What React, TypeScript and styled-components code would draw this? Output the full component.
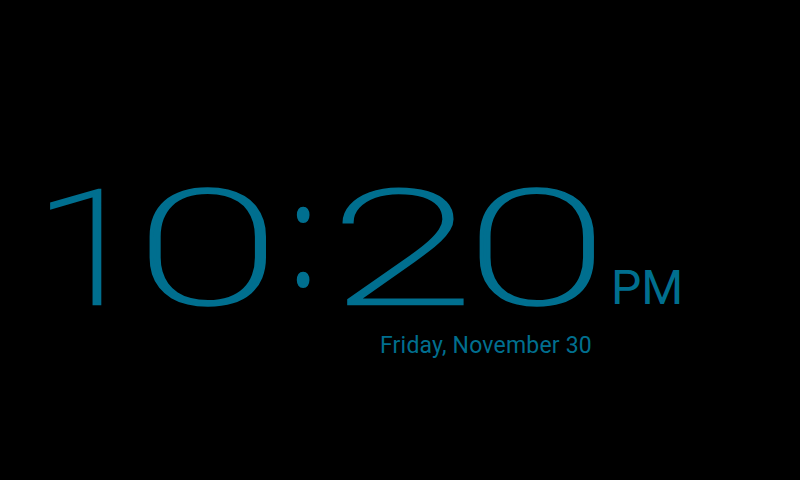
import styled, { createGlobalStyle } from "styled-components";

const GlobalStyle = createGlobalStyle`
    html, body {
        margin: 0;
        padding: 0;
        background: #000;
    }
`;

const accent = "#006f8f";

const Screen = styled.div`
    width: 800px;
    height: 480px;
    background: #000;
    overflow: hidden;
    font-family: Roboto, "Noto Sans", sans-serif;
    color: ${accent};
`;

const Clock = styled.div`
    display: flex;
    align-items: baseline;
    padding: 170px 0 0 40px;
`;

const Face = styled.div`
    display: flex;
    flex-direction: column;
    align-items: flex-end;
`;

const Digits = styled.div`
    display: flex;
    font-size: 160px;
    font-weight: 100;
    line-height: 1;
    -webkit-text-stroke: 2.5px ${accent};
`;

const Char = styled.span<{ $w: number; $gap: number }>`
    display: flex;
    justify-content: center;
    width: ${(p) => p.$w}px;
    margin-left: ${(p) => p.$gap}px;
`;

const Glyph = styled.span<{ $sx: number }>`
    display: inline-block;
    transform: scaleX(${(p) => p.$sx});
`;

const Colon = styled.span`
    display: inline-block;
    font-weight: 400;
    font-size: 150px;
    -webkit-text-stroke: 0;
    transform: translateY(-9px) scaleX(0.75);
`;

const DateLine = styled.div`
    margin: 4px 6px 0 0;
    font-size: 23px;
    line-height: 1;
    letter-spacing: 0.2px;
`;

const Meridiem = styled.span`
    margin-left: 13px;
    font-size: 48px;
    line-height: 1;
`;

const time = [
    { ch: "1", w: 72, gap: 14, sx: 1.3 },
    { ch: "0", w: 121, gap: 21, sx: 1.65 },
    { ch: ":", w: 20, gap: 25, sx: 1 },
    { ch: "2", w: 123, gap: 27, sx: 1.65 },
    { ch: "0", w: 122, gap: 13, sx: 1.62 },
];

export default function App() {
    return (
        <>
            <GlobalStyle />
            <Screen>
                <Clock>
                    <Face>
                        <Digits>
                            {time.map((t, idx) => (
                                <Char key={idx} $w={t.w} $gap={t.gap}>
                                    {t.ch === ":" ? (
                                        <Colon>:</Colon>
                                    ) : (
                                        <Glyph $sx={t.sx}>{t.ch}</Glyph>
                                    )}
                                </Char>
                            ))}
                        </Digits>
                        <DateLine>Friday, November 30</DateLine>
                    </Face>
                    <Meridiem>PM</Meridiem>
                </Clock>
            </Screen>
        </>
    );
}
